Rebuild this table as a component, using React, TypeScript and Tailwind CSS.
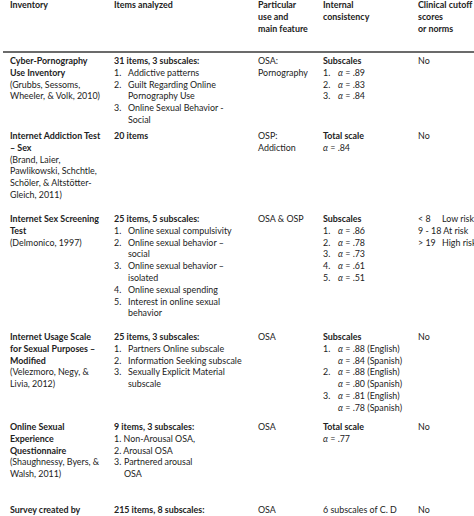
import React from "react";

const A = ({ v }: { v: string }) => (
  <span>
    <i>α</i> = {v}
  </span>
);

const Num = ({ n, children, w = "w-[14px]" }: { n: string; children: React.ReactNode; w?: string }) => (
  <div className="flex whitespace-nowrap">
    <span className={`${w} shrink-0`}>{n}</span>
    <div>{children}</div>
  </div>
);

const L = ({ children }: { children: React.ReactNode }) => <div className="whitespace-nowrap">{children}</div>;

const Row = ({ h, cols }: { h: string; cols: React.ReactNode[] }) => (
  <div className={`grid grid-cols-[104px_144px_65px_95px_1fr] ${h}`}>
    {cols.map((c, i) => (
      <div key={i}>{c}</div>
    ))}
  </div>
);

export default function App() {
  return (
    <div
      className="w-[474px] h-[516px] overflow-hidden bg-white text-[#222222] text-[8.9px] leading-[11.8px]"
      style={{ fontFamily: "Lato, 'Liberation Sans', sans-serif" }}
    >
      <div className="pl-[10px] -mt-px">
        <div className="grid grid-cols-[104px_144px_65px_95px_1fr] h-[52px] font-bold">
          <div>Inventory</div>
          <div>Items analyzed</div>
          <div>
            <L>Particular</L>
            <L>use and</L>
            <L>main feature</L>
          </div>
          <div>
            <L>Internal</L>
            <L>consistency</L>
          </div>
          <div>
            <L>Clinical cutoff</L>
            <L>scores</L>
            <L>or norms</L>
          </div>
        </div>
      </div>
      <div className="ml-[3px] h-[2px] bg-[#6b6b6b]" />
      <div className="pl-[10px] pt-[2px]">
        <Row
          h="h-[75px]"
          cols={[
            <>
              <L><b>Cyber-Pornography</b></L>
              <L><b>Use Inventory</b></L>
              <L>(Grubbs, Sessoms,</L>
              <L>Wheeler, &amp; Volk, 2010)</L>
            </>,
            <>
              <L><b>31 items, 3 subscales:</b></L>
              <Num n="1.">Addictive patterns</Num>
              <Num n="2."><L>Guilt Regarding Online</L><L>Pornography Use</L></Num>
              <Num n="3."><L>Online Sexual Behavior -</L><L>Social</L></Num>
            </>,
            <>
              <L>OSA:</L>
              <L>Pornography</L>
            </>,
            <>
              <L><b>Subscales</b></L>
              <Num n="1." w="w-[15px]"><A v=".89" /></Num>
              <Num n="2." w="w-[15px]"><A v=".83" /></Num>
              <Num n="3." w="w-[15px]"><A v=".84" /></Num>
            </>,
            <L>No</L>,
          ]}
        />
        <Row
          h="h-[83px]"
          cols={[
            <>
              <L><b>Internet Addiction Test</b></L>
              <L><b>– Sex</b></L>
              <L>(Brand, Laier,</L>
              <L>Pawlikowski, Schchtle,</L>
              <L>Schöler, &amp; Altstötter-</L>
              <L>Gleich, 2011)</L>
            </>,
            <L><b>20 items</b></L>,
            <>
              <L>OSP:</L>
              <L>Addiction</L>
            </>,
            <>
              <L><b>Total scale</b></L>
              <L><A v=".84" /></L>
            </>,
            <L>No</L>,
          ]}
        />
        <Row
          h="h-[118px]"
          cols={[
            <>
              <L><b>Internet Sex Screening</b></L>
              <L><b>Test</b></L>
              <L>(Delmonico, 1997)</L>
            </>,
            <>
              <L><b>25 items, 5 subscales:</b></L>
              <Num n="1.">Online sexual compulsivity</Num>
              <Num n="2."><L>Online sexual behavior –</L><L>social</L></Num>
              <Num n="3."><L>Online sexual behavior –</L><L>isolated</L></Num>
              <Num n="4.">Online sexual spending</Num>
              <Num n="5."><L>Interest in online sexual</L><L>behavior</L></Num>
            </>,
            <L>OSA &amp; OSP</L>,
            <>
              <L><b>Subscales</b></L>
              <Num n="1." w="w-[15px]"><A v=".86" /></Num>
              <Num n="2." w="w-[15px]"><A v=".78" /></Num>
              <Num n="3." w="w-[15px]"><A v=".73" /></Num>
              <Num n="4." w="w-[15px]"><A v=".61" /></Num>
              <Num n="5." w="w-[15px]"><A v=".51" /></Num>
            </>,
            <>
              <Num n="< 8" w="w-[24px]">Low risk</Num>
              <L>9 - 18 At risk</L>
              <Num n="> 19" w="w-[24px]">High risk</Num>
            </>,
          ]}
        />
        <Row
          h="h-[90px]"
          cols={[
            <>
              <L><b>Internet Usage Scale</b></L>
              <L><b>for Sexual Purposes –</b></L>
              <L><b>Modified</b></L>
              <L>(Velezmoro, Negy, &amp;</L>
              <L>Livia, 2012)</L>
            </>,
            <>
              <L><b>25 items, 3 subscales:</b></L>
              <Num n="1.">Partners Online subscale</Num>
              <Num n="2."><L>Information Seeking subscale</L></Num>
              <Num n="3."><L>Sexually Explicit Material</L><L>subscale</L></Num>
            </>,
            <L>OSA</L>,
            <>
              <L><b>Subscales</b></L>
              <Num n="1." w="w-[15px]"><L><A v=".88" /> (English)</L><L><A v=".84" /> (Spanish)</L></Num>
              <Num n="2." w="w-[15px]"><L><A v=".88" /> (English)</L><L><A v=".80" /> (Spanish)</L></Num>
              <Num n="3." w="w-[15px]"><L><A v=".81" /> (English)</L><L><A v=".78" /> (Spanish)</L></Num>
            </>,
            <L>No</L>,
          ]}
        />
        <Row
          h="h-[83px]"
          cols={[
            <>
              <L><b>Online Sexual</b></L>
              <L><b>Experience</b></L>
              <L><b>Questionnaire</b></L>
              <L>(Shaughnessy, Byers, &amp;</L>
              <L>Walsh, 2011)</L>
            </>,
            <>
              <L><b>9 items, 3 subscales:</b></L>
              <L>1. Non-Arousal OSA,</L>
              <L>2. Arousal OSA</L>
              <Num n="3." w="w-[10px]"><L>Partnered arousal</L><L>OSA</L></Num>
            </>,
            <L>OSA</L>,
            <>
              <L><b>Total scale</b></L>
              <L><A v=".77" /></L>
            </>,
            <L>No</L>,
          ]}
        />
        <Row
          h="h-[60px]"
          cols={[
            <>
              <L><b>Survey created by</b></L>
              <L><b>authors</b></L>
            </>,
            <L><b>215 items, 8 subscales:</b></L>,
            <L>OSA</L>,
            <L>6 subscales of C. D</L>,
            <L>No</L>,
          ]}
        />
      </div>
    </div>
  );
}
